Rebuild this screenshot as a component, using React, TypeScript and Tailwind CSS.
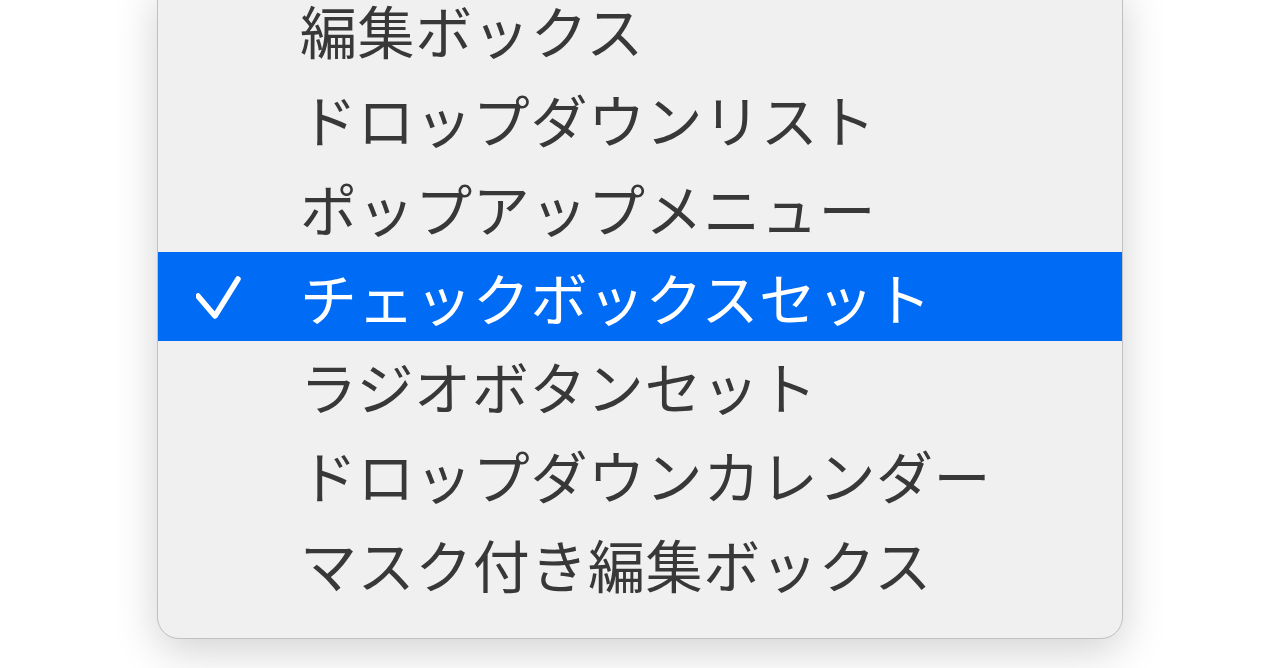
const ITEMS = [
  '編集ボックス',
  'ドロップダウンリスト',
  'ポップアップメニュー',
  'チェックボックスセット',
  'ラジオボタンセット',
  'ドロップダウンカレンダー',
  'マスク付き編集ボックス',
];

const SELECTED = 3;

function Check() {
  return (
    <svg width="48" height="46" viewBox="0 0 48 46" fill="none">
      <polyline
        points="2,21 19,41 42,4"
        stroke="white"
        strokeWidth="5.5"
        strokeLinecap="round"
        strokeLinejoin="round"
      />
    </svg>
  );
}

export default function App() {
  return (
    <div
      className="h-[668px] w-[1280px] overflow-hidden bg-white"
      style={{ fontFamily: '"Noto Sans CJK JP", "Noto Sans", sans-serif' }}
    >
      <div className="-mt-[16px] ml-[157px] w-[966px] rounded-b-[22px] border border-[#c0c0c0] bg-[#f0f0f0] pb-[30px] shadow-[0_12px_44px_rgba(0,0,0,0.18)]">
        {ITEMS.map((label, i) => {
          const active = i === SELECTED;
          return (
            <div
              key={label}
              className={`flex h-[89px] items-center pl-[38px] ${active ? 'bg-[#006bf5] text-white' : 'text-[#383838]'}`}
            >
              <span className="flex w-[104px] items-center pt-[3px]">{active && <Check />}</span>
              <span className="text-[57px] leading-none tracking-[0.6px] whitespace-nowrap">{label}</span>
            </div>
          );
        })}
      </div>
    </div>
  );
}
